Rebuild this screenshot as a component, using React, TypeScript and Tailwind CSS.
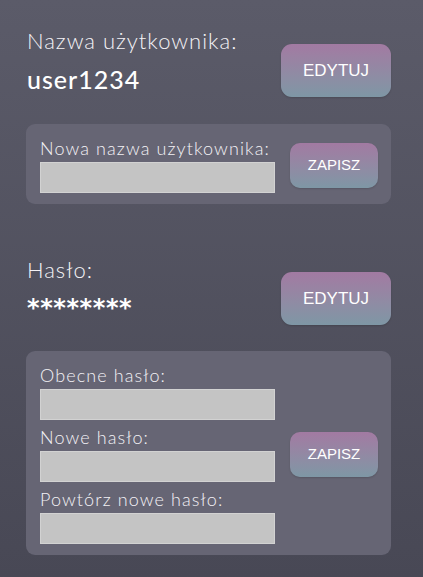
import React from 'react';

const label = "font-['Lato',sans-serif] text-[#f4f2f6]";

const Field: React.FC<{ title: string; first?: boolean }> = ({ title, first }) => (
  <div className={first ? '' : 'mt-[7px]'}>
    <div className={`${label} text-[18px] leading-[20px] font-light tracking-[1.1px] h-[20px] whitespace-nowrap`}>{title}</div>
    <div className="mt-[4px] h-[31px] w-[235px] bg-[#c4c4c4] border border-[#d2d2d2]" />
  </div>
);

const GradButton: React.FC<{ text: string; big?: boolean }> = ({ text, big }) => (
  <button
    className={
      big
        ? "w-[110px] h-[53px] rounded-[11px] bg-gradient-to-b from-[#a27aa2] to-[#7e97a5] text-white text-[17px] font-['Liberation_Sans',Arial,sans-serif] shadow-[0_1px_2px_rgba(0,0,0,0.15)]"
        : "w-[88px] h-[45px] rounded-[10px] bg-gradient-to-b from-[#a27aa2] to-[#7e97a5] text-white text-[15px] font-['Liberation_Sans',Arial,sans-serif] shadow-[0_1px_2px_rgba(0,0,0,0.15)]"
    }
  >
    {text}
  </button>
);

export default function App() {
  return (
    <div className="min-h-[577px] w-[423px] bg-gradient-to-b from-[#5b5b69] to-[#484855] pl-[26px] pr-[32px] pt-[27px]">
      {/* nazwa użytkownika */}
      <div className="flex justify-between items-start">
        <div className="pl-[1px]">
          <div className={`${label} text-[22px] leading-[28px] font-light tracking-[1px]`}>Nazwa użytkownika:</div>
          <div className="font-['Lato',sans-serif] text-white text-[25px] leading-[30px] font-medium tracking-[1px] mt-[9px]">user1234</div>
        </div>
        <div className="mt-[17px]">
          <GradButton text="EDYTUJ" big />
        </div>
      </div>

      <div className="mt-[27px] rounded-[9px] bg-[#666574] pt-[14px] pb-[11px] pl-[14px] pr-[13px] flex items-center justify-between">
        <Field title="Nowa nazwa użytkownika:" first />
        <GradButton text="ZAPISZ" />
      </div>

      {/* hasło */}
      <div className="mt-[52px] flex justify-between items-start">
        <div className="pl-[1px]">
          <div className={`${label} text-[22px] leading-[28px] font-light tracking-[1px]`}>Hasło:</div>
          <div className="font-['DejaVu_Sans',sans-serif] text-white text-[24px] leading-[30px] font-bold tracking-[0.6px] mt-[9px]">********</div>
        </div>
        <div className="mt-[16px]">
          <GradButton text="EDYTUJ" big />
        </div>
      </div>

      <div className="mt-[26px] rounded-[9px] bg-[#666574] pt-[14px] pb-[11px] pl-[14px] pr-[13px] flex items-center justify-between">
        <div>
          <Field title="Obecne hasło:" first />
          <Field title="Nowe hasło:" />
          <Field title="Powtórz nowe hasło:" />
        </div>
        <GradButton text="ZAPISZ" />
      </div>
    </div>
  );
}
